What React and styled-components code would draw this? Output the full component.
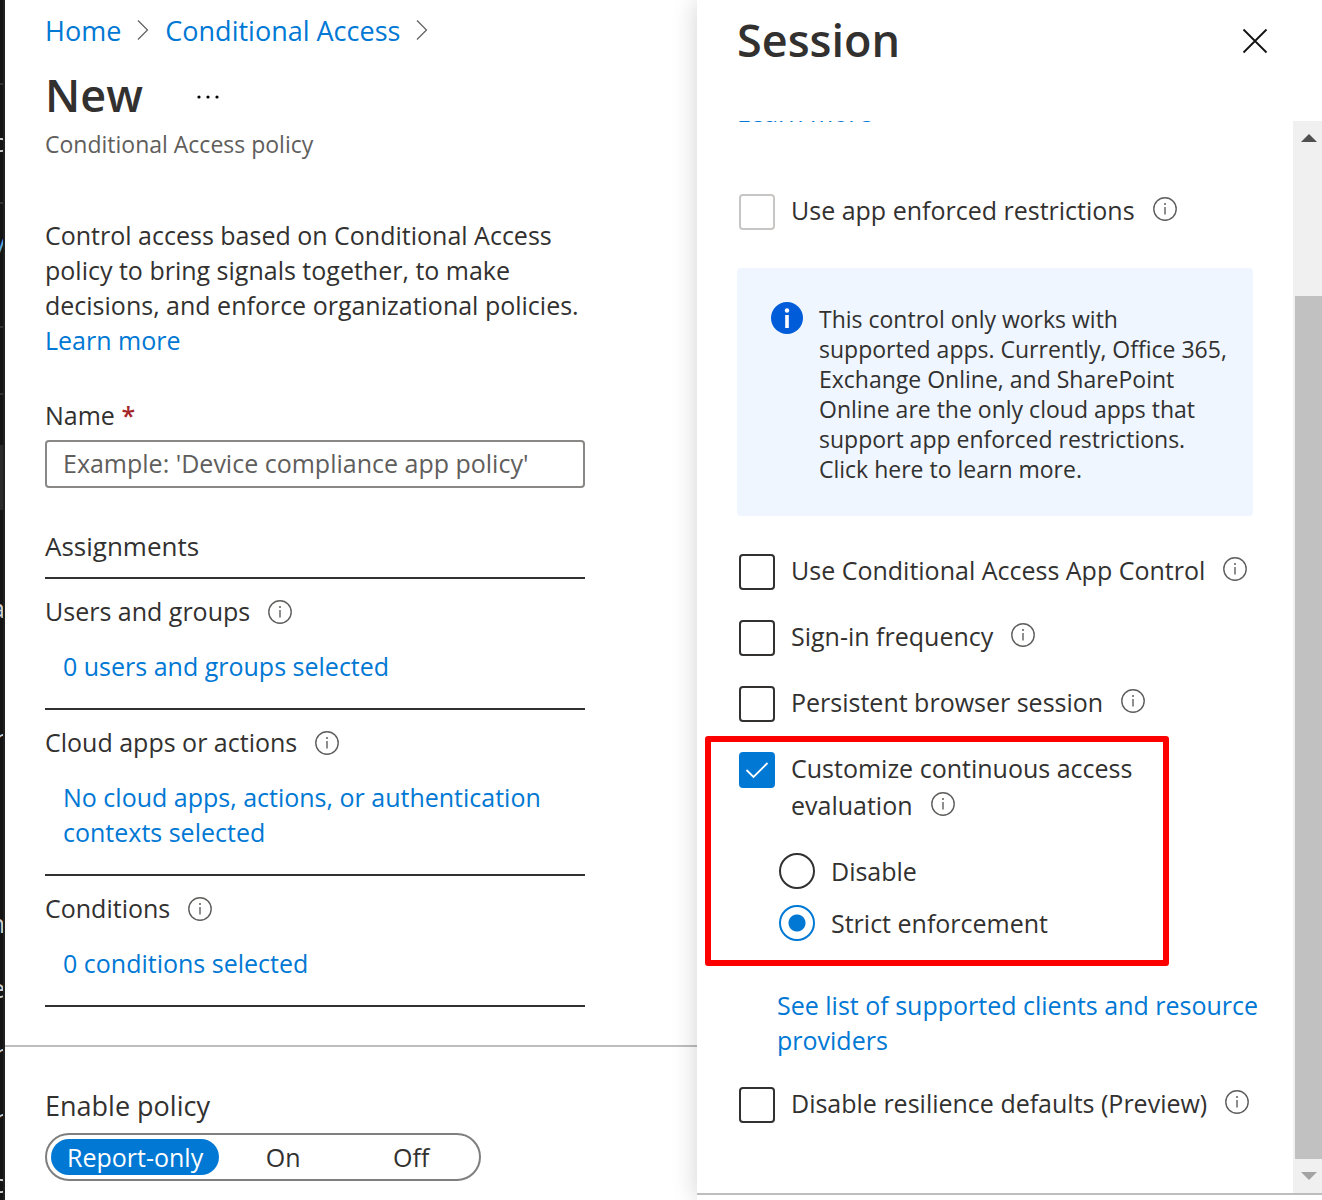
import styled, { createGlobalStyle } from "styled-components";
import { useState } from "react";

const colors = {
  text: "#323130",
  sub: "#605e5c",
  link: "#0078d4",
  line: "#323130",
  border: "#8a8886",
  divider: "#bdbdbd",
};

const GlobalStyle = createGlobalStyle`
  * {
    box-sizing: border-box;
  }
  body {
    margin: 0;
    background: #fff;
    color: ${colors.text};
    font-family: "Segoe UI", "Open Sans", "Noto Sans", sans-serif;
    font-size: 25px;
    line-height: 35px;
  }
  button,
  input {
    font: inherit;
    color: inherit;
  }
  h1, h2, h3, p, ul {
    margin: 0;
    padding: 0;
    font-weight: 400;
  }
`;

const Page = styled.div`
  display: flex;
  height: 100vh;
  min-height: 1200px;
  overflow: hidden;
`;

/* portal menu, almost fully covered by the blade */
const Rail = styled.ul`
  flex: 0 0 5px;
  overflow: hidden;
  background: #141414;
  border-right: 2px solid #202020;
  list-style: none;
`;
const RailItem = styled.li`
  height: ${(props) => props.$height}px;
  border-bottom: ${(props) => (props.$line ? "2px solid #333" : "none")};
  background: ${(props) => (props.$active ? "#2b2b2b" : "transparent")};
  color: ${(props) => props.$color || "#d0d0d0"};
  font-size: 25px;
  line-height: ${(props) => props.$height - 4}px;
  span {
    display: block;
    width: 5px;
    direction: rtl;
    white-space: nowrap;
  }
`;

const Policy = styled.main`
  flex: 1 1 0;
  min-width: 0;
  display: flex;
  flex-direction: column;
`;
const PolicyBody = styled.div`
  flex: 1;
  padding: 13px 40px 0;
`;
const Column = styled.div`
  max-width: 540px;
`;
const Breadcrumb = styled.nav`
  display: flex;
  align-items: center;
  gap: 14px;
  font-size: 27px;
`;
const Link = styled.a`
  color: ${colors.link};
  text-decoration: none;
`;
const TitleRow = styled.div`
  display: flex;
  align-items: center;
  gap: 53px;
  margin-top: 17px;
`;
const Title = styled.h1`
  padding-bottom: 3px;
  font-size: 45px;
  line-height: 60px;
  font-weight: 600;
`;
const IconButton = styled.button`
  display: inline-flex;
  flex: none;
  padding: 0;
  border: 0;
  background: none;
  cursor: pointer;
`;
const Subtitle = styled.p`
  font-size: 23px;
  line-height: 32px;
  color: ${colors.sub};
`;
const Intro = styled.p`
  margin-top: 58px;
  margin-right: -8px;
`;
const NameField = styled.div`
  display: flex;
  flex-direction: column;
  gap: 7px;
  margin-top: 40px;
  em {
    color: #a4262c;
    font-style: normal;
    font-weight: 600;
  }
  input {
    height: 48px;
    padding: 0 16px 2px;
    border: 2px solid ${colors.border};
    border-radius: 4px;
    background: #fff;
  }
  input::placeholder {
    color: ${colors.sub};
    opacity: 1;
  }
`;
const SectionTitle = styled.h2`
  margin-top: 41px;
  padding-bottom: 13px;
  border-bottom: 2px solid ${colors.line};
  font-size: 26px;
`;
const Assignment = styled.section`
  padding: 15px 0 24px;
  border-bottom: 2px solid ${colors.line};
  h3 {
    display: flex;
    align-items: center;
    gap: 18px;
    font-size: 25px;
  }
  p {
    margin-top: 20px;
    padding-left: 18px;
  }
`;
const PolicyFooter = styled.footer`
  padding: 41px 40px 19px;
  border-top: 2px solid ${colors.divider};
`;
const Toggle = styled.fieldset`
  margin: 0;
  padding: 0;
  border: 0;
  legend {
    padding: 0;
    margin-bottom: 10px;
    font-size: 27px;
  }
`;
const ToggleTrack = styled.div`
  display: inline-flex;
  vertical-align: top;
  padding: 4px;
  border: 2px solid #7f7f7f;
  border-radius: 24px;
`;
const ToggleOption = styled.button`
  min-width: 128px;
  height: 36px;
  padding: 0 16px;
  border: 0;
  border-radius: 18px;
  background: ${(props) => (props.$on ? colors.link : "transparent")};
  color: ${(props) => (props.$on ? "#fff" : colors.text)};
  line-height: 34px;
  cursor: pointer;
`;

const Session = styled.aside`
  position: relative;
  flex: 0 1 625px;
  min-width: 0;
  display: flex;
  flex-direction: column;
  background: #fff;
  box-shadow: 0 0 24px rgba(0, 0, 0, 0.18);
`;
const SessionHeader = styled.header`
  display: flex;
  justify-content: space-between;
  align-items: center;
  height: 121px;
  padding: 0 54px 39px 40px;
`;
const SessionMain = styled.div`
  flex: 1;
  min-height: 0;
  display: flex;
  margin-bottom: 5px;
  border-bottom: 2px solid ${colors.divider};
`;
const SessionScroll = styled.div`
  flex: 1;
  min-width: 0;
  overflow: hidden;
  padding: 0 40px;
`;
const ScrolledLine = styled.p`
  margin-top: -26px;
  margin-bottom: 64px;
`;
const Options = styled.div`
  display: flex;
  flex-direction: column;
  gap: ${(props) => props.$gap}px;
`;
const Option = styled.div`
  display: flex;
  align-items: flex-start;
  gap: 16px;
  height: ${(props) => (props.$tall ? "auto" : "36px")};
  padding-left: ${(props) => props.$indent || 2}px;
  line-height: 36px;
`;
const OptionText = styled.div`
  max-width: ${(props) => (props.$narrow ? "360px" : "none")};
  margin-top: -2px;
  line-height: 37px;
  ${IconButton} {
    margin-left: 18px;
    vertical-align: -1px;
  }
`;
const Check = styled.input`
  appearance: none;
  flex: none;
  width: 36px;
  height: 36px;
  margin: 0;
  border: 2px solid ${(props) => (props.$muted ? "#c8c6c4" : colors.line)};
  border-radius: 4px;
  background: #fff;
  &:checked {
    border-color: ${colors.link};
    background: ${colors.link};
  }
`;
const CheckWrap = styled.span`
  display: grid;
  flex: none;
  > * {
    grid-area: 1 / 1;
  }
  svg {
    pointer-events: none;
  }
`;
const Radio = styled.input`
  appearance: none;
  flex: none;
  width: 36px;
  height: 36px;
  margin: 0;
  border: 2px solid ${colors.line};
  border-radius: 50%;
  background: #fff;
  &:checked {
    border-color: ${colors.link};
    background: radial-gradient(circle, ${colors.link} 8px, #fff 9px);
  }
`;
const Notice = styled.div`
  display: flex;
  gap: 16px;
  margin: 38px 0;
  padding: 34px 24px 34px 34px;
  border-radius: 4px;
  background: #eff6ff;
  font-size: 23px;
  line-height: 30px;
  svg {
    flex: none;
  }
  p {
    padding-top: 2px;
    margin-bottom: -2px;
  }
`;
const Highlighted = styled.div`
  position: relative;
`;
const Mark = styled.div`
  position: absolute;
  top: -16px;
  bottom: -25px;
  left: -32px;
  width: 464px;
  border: 6px solid #ff0000;
  border-radius: 3px;
  pointer-events: none;
`;
const RadioGroup = styled(Options)`
  margin-top: 29px;
`;
const Clients = styled.p`
  margin: 47px -16px 29px 0;
  padding-left: 40px;
`;
const Scrollbar = styled.div`
  flex: 0 0 29px;
  display: flex;
  flex-direction: column;
  padding-left: 2px;
  background: #f0f0f0;
  button {
    height: 34px;
    align-items: center;
    justify-content: center;
  }
`;
const Thumb = styled.div`
  flex: 1;
  margin-top: 141px;
  background: #c1c1c1;
`;

const InfoIcon = () => (
  <svg width="24" height="24" viewBox="0 0 24 24" fill="none">
    <circle cx="12" cy="12" r="11.2" stroke="#605e5c" strokeWidth="1.4" />
    <path d="M12 10v7.5" stroke="#605e5c" strokeWidth="1.4" />
    <circle cx="12" cy="7" r="1" fill="#605e5c" />
  </svg>
);
const Info = ({ label }) => (
  <IconButton type="button" aria-label={`${label} info`}>
    <InfoIcon />
  </IconButton>
);
const Chevron = () => (
  <svg width="16" height="22" viewBox="0 0 16 22" fill="none">
    <path d="M3 0.500l9.500 9.500L3 19.500" stroke="#605e5c" strokeWidth="1.2" />
  </svg>
);

const railItems = [
  { height: 85, line: true },
  { height: 119, text: "c", line: true },
  { height: 82, text: "y", color: "#5ea9e0" },
  { height: 42, line: true },
  { height: 67, line: true },
  { height: 50 },
  { height: 65, active: true },
  { height: 68 },
  { height: 65, text: "a" },
  { height: 65 },
  { height: 65, text: "r" },
  { height: 120 },
  { height: 65, text: "n" },
  { height: 65, text: "e" },
  { height: 65, text: "r" },
  { height: 65, text: "r" },
  { height: 65, text: "c" },
];

const assignments = [
  { title: "Users and groups", value: "0 users and groups selected" },
  {
    title: "Cloud apps or actions",
    value: "No cloud apps, actions, or authentication contexts selected",
  },
  { title: "Conditions", value: "0 conditions selected" },
];

const CheckOption = ({ id, label, muted, narrow, defaultChecked }) => {
  const [checked, setChecked] = useState(!!defaultChecked);
  return (
    <Option $tall={narrow}>
      <CheckWrap>
        <Check
          type="checkbox"
          id={id}
          $muted={muted}
          checked={checked}
          onChange={(e) => setChecked(e.target.checked)}
        />
        {checked && (
          <svg width="36" height="36" viewBox="0 0 36 36" fill="none">
            <path d="M7.500 18l7 7L28.500 11" stroke="#fff" strokeWidth="1.8" />
          </svg>
        )}
      </CheckWrap>
      <OptionText $narrow={narrow}>
        <label htmlFor={id}>{label}</label>
        <Info label={label} />
      </OptionText>
    </Option>
  );
};

export default function App() {
  const [mode, setMode] = useState("Report-only");
  const [cae, setCae] = useState("strict");

  return (
    <>
      <GlobalStyle />
      <Page>
        <Rail>
          {railItems.map((item, i) => (
            <RailItem
              key={i}
              $height={item.height}
              $line={item.line}
              $active={item.active}
              $color={item.color}
            >
              <span>{item.text}</span>
            </RailItem>
          ))}
        </Rail>

        <Policy>
          <PolicyBody>
            <Breadcrumb>
              <Link href="#home">Home</Link>
              <Chevron />
              <Link href="#conditional-access">Conditional Access</Link>
              <Chevron />
            </Breadcrumb>
            <TitleRow>
              <Title>New</Title>
              <IconButton type="button" aria-label="More">
                <svg width="24" height="8" viewBox="0 0 24 8">
                  <circle cx="3" cy="4" r="1.6" />
                  <circle cx="12" cy="4" r="1.6" />
                  <circle cx="21" cy="4" r="1.6" />
                </svg>
              </IconButton>
            </TitleRow>
            <Subtitle>Conditional Access policy</Subtitle>
            <Column>
              <Intro>
                Control access based on Conditional Access policy to bring
                signals together, to make decisions, and enforce organizational
                policies. <Link href="#learn">Learn more</Link>
              </Intro>
              <NameField>
                <label htmlFor="name">
                  Name <em>*</em>
                </label>
                <input
                  id="name"
                  type="text"
                  placeholder="Example: 'Device compliance app policy'"
                />
              </NameField>
              <SectionTitle>Assignments</SectionTitle>
              {assignments.map((item) => (
                <Assignment key={item.title}>
                  <h3>
                    {item.title}
                    <Info label={item.title} />
                  </h3>
                  <p>
                    <Link href="#select">{item.value}</Link>
                  </p>
                </Assignment>
              ))}
            </Column>
          </PolicyBody>
          <PolicyFooter>
            <Toggle>
              <legend>Enable policy</legend>
              <ToggleTrack>
                {["Report-only", "On", "Off"].map((name) => (
                  <ToggleOption
                    key={name}
                    type="button"
                    aria-pressed={mode === name}
                    $on={mode === name}
                    onClick={() => setMode(name)}
                  >
                    {name}
                  </ToggleOption>
                ))}
              </ToggleTrack>
            </Toggle>
          </PolicyFooter>
        </Policy>

        <Session>
          <SessionHeader>
            <Title as="h2">Session</Title>
            <IconButton type="button" aria-label="Close">
              <svg width="26" height="26" viewBox="0 0 26 26" fill="none">
                <path d="M1.500 1.500l23 23M24.500 1.500l-23 23" stroke="#111" strokeWidth="1.8" />
              </svg>
            </IconButton>
          </SessionHeader>
          <SessionMain>
            <SessionScroll>
              <ScrolledLine>
                <Link href="#learn">Learn more</Link>
              </ScrolledLine>
              <CheckOption id="enforced" label="Use app enforced restrictions" muted />
              <Notice>
                <svg width="32" height="32" viewBox="0 0 32 32">
                  <circle cx="16" cy="16" r="16" fill="#015cda" />
                  <circle cx="16" cy="8.500" r="2.200" fill="#fff" />
                  <path d="M14.200 13h3.600v13h-3.600z" fill="#fff" />
                </svg>
                <p>
                  This control only works with supported apps. Currently, Office
                  365, Exchange Online, and SharePoint Online are the only cloud
                  apps that support app enforced restrictions. Click here to
                  learn more.
                </p>
              </Notice>
              <Options $gap={30}>
                <CheckOption id="app-control" label="Use Conditional Access App Control" />
                <CheckOption id="frequency" label="Sign-in frequency" />
                <CheckOption id="persistent" label="Persistent browser session" />
                <Highlighted>
                  <CheckOption
                    id="cae"
                    label="Customize continuous access evaluation"
                    narrow
                    defaultChecked
                  />
                  <RadioGroup $gap={16}>
                    <Option as="label" $indent={42}>
                      <Radio
                        type="radio"
                        name="cae-mode"
                        checked={cae === "disable"}
                        onChange={() => setCae("disable")}
                      />
                      Disable
                    </Option>
                    <Option as="label" $indent={42}>
                      <Radio
                        type="radio"
                        name="cae-mode"
                        checked={cae === "strict"}
                        onChange={() => setCae("strict")}
                      />
                      Strict enforcement
                    </Option>
                  </RadioGroup>
                  <Mark />
                </Highlighted>
              </Options>
              <Clients>
                <Link href="#clients">
                  See list of supported clients and resource providers
                </Link>
              </Clients>
              <CheckOption id="resilience" label="Disable resilience defaults (Preview)" />
            </SessionScroll>
            <Scrollbar>
              <IconButton type="button" aria-label="Scroll up">
                <svg width="16" height="8" viewBox="0 0 16 8">
                  <path d="M0 8l8-8 8 8z" fill="#505050" />
                </svg>
              </IconButton>
              <Thumb />
              <IconButton type="button" aria-label="Scroll down">
                <svg width="16" height="8" viewBox="0 0 16 8">
                  <path d="M0 0l8 8 8-8z" fill="#a3a3a3" />
                </svg>
              </IconButton>
            </Scrollbar>
          </SessionMain>
        </Session>
      </Page>
    </>
  );
}
